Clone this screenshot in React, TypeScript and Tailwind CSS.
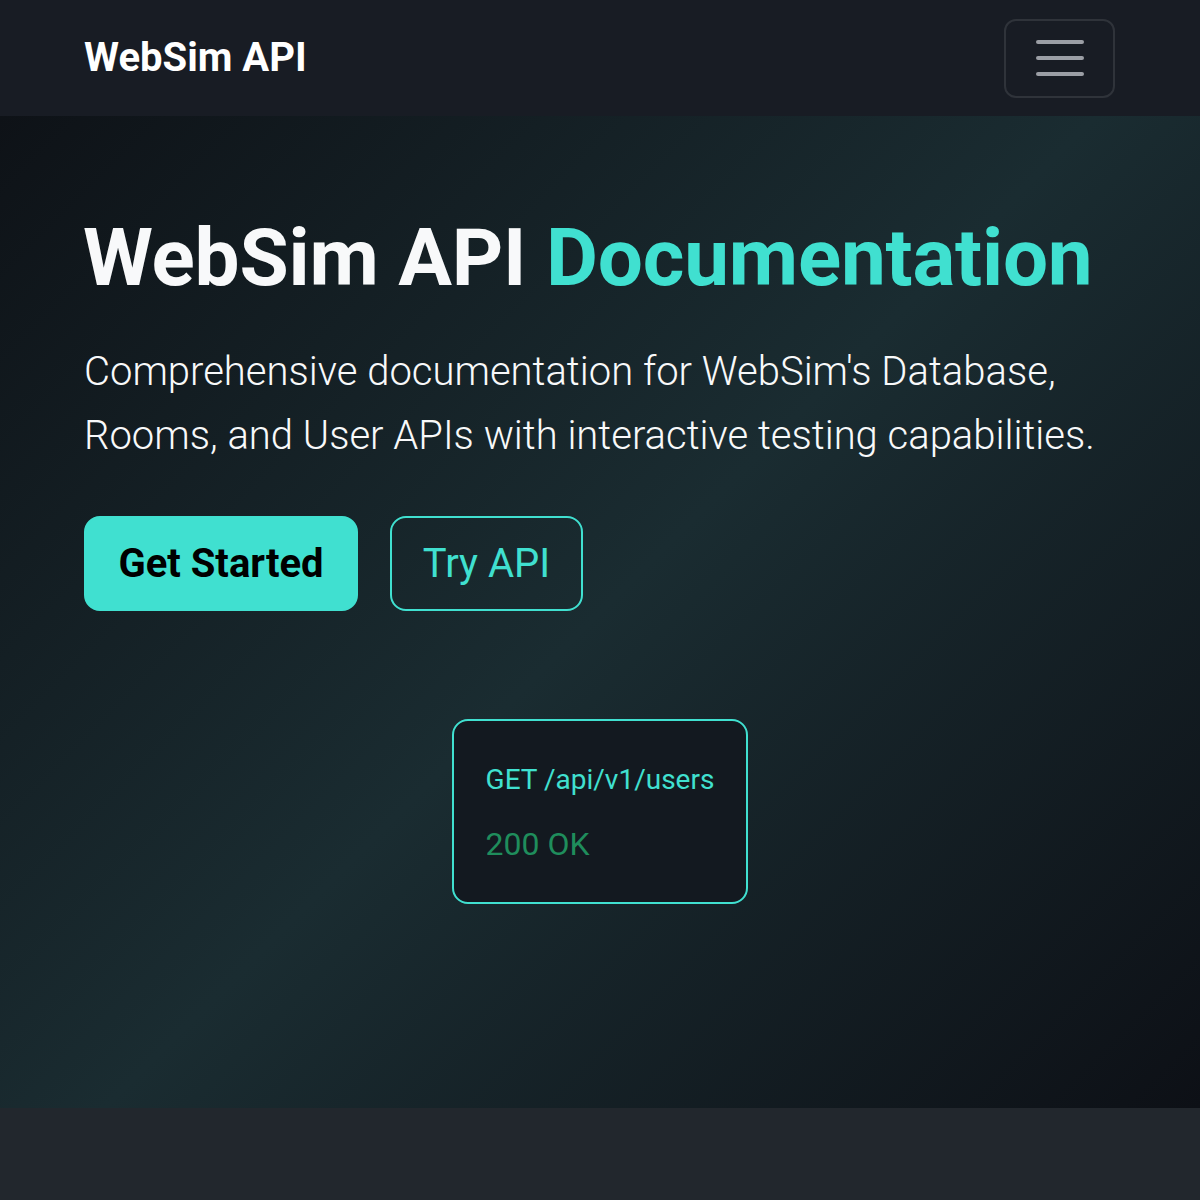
export default function App() {
  return (
    <div className="min-h-[1200px] bg-[#22272d] font-['Roboto',sans-serif]">
      {/* Navbar */}
      <nav className="h-[116px] bg-[#181c24] px-[85px] flex items-center justify-between">
        <a href="#" className="-ml-px text-[40px] leading-[60px] font-bold text-white">
          WebSim API
        </a>
        <button className="w-[111px] h-[79px] border-2 border-[#2f333a] rounded-[12px] flex flex-col items-center justify-center gap-3">
          <span className="block w-12 h-1 rounded-full bg-[#9b9ea5]" />
          <span className="block w-12 h-1 rounded-full bg-[#9b9ea5]" />
          <span className="block w-12 h-1 rounded-full bg-[#9b9ea5]" />
        </button>
      </nav>

      {/* Hero */}
      <section className="h-[992px] bg-[linear-gradient(135deg,#0e1217_0%,#1a2c31_50%,#0d1016_100%)] px-[84px] pt-[94px]">
        <h1 className="-ml-px text-[80px] leading-[96px] font-bold text-[#f8f9fa] tracking-[-0.2px]">
          WebSim API <span className="text-[#40e0d0]">Documentation</span>
        </h1>
        <p className="mt-[34px] text-[40px] leading-[64px] font-light text-[#f8f9fa]">
          Comprehensive documentation for WebSim's Database,
          <br />
          Rooms, and User APIs with interactive testing capabilities.
        </p>
        <div className="mt-12 flex gap-8">
          <a
            href="#"
            className="w-[274px] h-[95px] rounded-[16px] bg-[#40e0d0] border-2 border-[#40e0d0] text-[40px] font-bold text-black flex items-center justify-center"
          >
            Get Started
          </a>
          <a
            href="#"
            className="w-[193px] h-[95px] rounded-[16px] border-2 border-[#40e0d0] text-[40px] text-[#40e0d0] flex items-center justify-center"
          >
            Try API
          </a>
        </div>

        {/* Sample request card */}
        <div className="mt-[108px] flex justify-center">
          <div className="rounded-[16px] border-2 border-[#40e0d0] bg-[#131920] px-8 pt-[38px] pb-[34px] whitespace-nowrap">
            <div className="text-[28px] leading-[42px] text-[#40e0d0]">GET /api/v1/users</div>
            <div className="mt-[19px] text-[32px] leading-[48px] text-[#1f8d5c]">200 OK</div>
          </div>
        </div>
      </section>
    </div>
  );
}
